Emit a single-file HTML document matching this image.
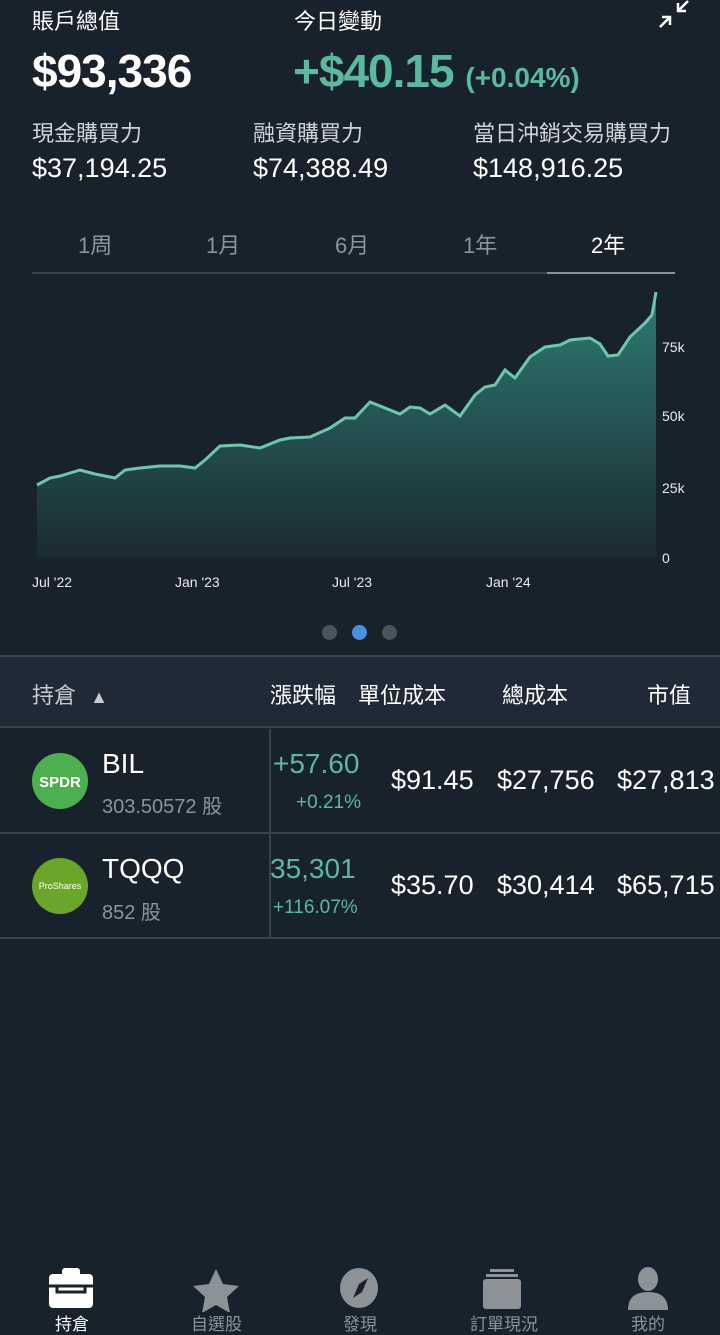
<!DOCTYPE html>
<html><head><meta charset="utf-8"><style>
*{margin:0;padding:0;box-sizing:border-box}
body{width:720px;height:1331px;background:#18222c;font-family:"Liberation Sans","Noto Sans CJK TC",sans-serif;color:#fff;position:relative;overflow:hidden}
.a{position:absolute;white-space:nowrap}
.g{color:#5db8a0}
.gr{color:#8b949c}
</style></head><body>
<div class="a" style="left:32px;top:4px;font-size:22px">賬戶總值</div>
<div class="a" style="left:294px;top:4px;font-size:22px">今日變動</div>
<svg class="a" style="left:656px;top:0" width="36" height="32" viewBox="0 0 36 32"><path d="M4 27L14 17M6 17h8v8M32 1L22 11M30 11h-8V3" stroke="#fff" stroke-width="2.5" fill="none"/></svg>
<div class="a" style="left:32px;top:44px;font-size:46px;font-weight:bold;letter-spacing:-1px">$93,336</div>
<div class="a g" style="left:293px;top:44px;font-size:46px;font-weight:bold;letter-spacing:-1px">+$40.15 <span style="font-size:28px;letter-spacing:0">(+0.04%)</span></div>
<div class="a" style="left:32px;top:116px;font-size:22px;color:#d0d4d8">現金購買力</div>
<div class="a" style="left:253px;top:116px;font-size:22px;color:#d0d4d8">融資購買力</div>
<div class="a" style="left:473px;top:116px;font-size:22px;color:#d0d4d8">當日沖銷交易購買力</div>
<div class="a" style="left:32px;top:153px;font-size:27px">$37,194.25</div>
<div class="a" style="left:253px;top:153px;font-size:27px">$74,388.49</div>
<div class="a" style="left:473px;top:153px;font-size:27px">$148,916.25</div>
<div class="a gr" style="left:78px;top:228px;font-size:22px">1周</div>
<div class="a gr" style="left:206px;top:228px;font-size:22px">1月</div>
<div class="a gr" style="left:335px;top:228px;font-size:22px">6月</div>
<div class="a gr" style="left:463px;top:228px;font-size:22px">1年</div>
<div class="a" style="left:591px;top:228px;font-size:22px">2年</div>
<div class="a" style="left:32px;top:272px;width:643px;height:2px;background:#3a444e"></div>
<div class="a" style="left:547px;top:272px;width:128px;height:2px;background:#8a939b"></div>
<svg class="a" style="left:0;top:280px" width="720" height="320" viewBox="0 280 720 320">
<defs><linearGradient id="f" x1="0" y1="0" x2="0" y2="1"><stop offset="0" stop-color="#2e7a72"/><stop offset="1" stop-color="#1a2a32"/></linearGradient></defs>
<path d="M37 485L50 478 60 476 80 470 95 474 115 478 125 470 140 468 160 466 180 466 195 468 205 460 220 446 240 445 260 448 280 440 290 438 310 437 330 428 345 418 355 418 370 402 385 408 400 414 410 407 420 408 430 414 445 405 460 416 475 395 485 387 495 385 505 370 515 378 530 357 545 347 560 345 570 340 590 338 600 344 608 356 618 355 630 337 645 323 652 315 656 292 656 558 37 558Z" fill="url(#f)"/>
<path d="M37 485L50 478 60 476 80 470 95 474 115 478 125 470 140 468 160 466 180 466 195 468 205 460 220 446 240 445 260 448 280 440 290 438 310 437 330 428 345 418 355 418 370 402 385 408 400 414 410 407 420 408 430 414 445 405 460 416 475 395 485 387 495 385 505 370 515 378 530 357 545 347 560 345 570 340 590 338 600 344 608 356 618 355 630 337 645 323 652 315 656 292" fill="none" stroke="#6cc7ae" stroke-width="3"/>
<g fill="#e8eaec" font-size="14" font-family="Liberation Sans"><text x="662" y="352">75k</text><text x="662" y="421">50k</text><text x="662" y="493">25k</text><text x="662" y="563">0</text>
<text x="32" y="587">Jul '22</text><text x="175" y="587">Jan '23</text><text x="332" y="587">Jul '23</text><text x="486" y="587">Jan '24</text></g>
</svg>
<div class="a" style="left:322px;top:625px;width:15px;height:15px;border-radius:50%;background:#4a545e"></div>
<div class="a" style="left:352px;top:625px;width:15px;height:15px;border-radius:50%;background:#4a90e2"></div>
<div class="a" style="left:382px;top:625px;width:15px;height:15px;border-radius:50%;background:#4a545e"></div>
<div class="a" style="left:0;top:655px;width:720px;height:73px;background:#1f2a36;border-top:2px solid #38434e;border-bottom:2px solid #38434e"></div>
<div class="a" style="left:32px;top:678px;font-size:22px;color:#c8ccd0">持倉 <span style="font-size:18px;margin-left:8px">▲</span></div>
<div class="a" style="left:270px;top:678px;font-size:22px">漲跌幅</div>
<div class="a" style="left:358px;top:678px;font-size:22px">單位成本</div>
<div class="a" style="left:502px;top:678px;font-size:22px">總成本</div>
<div class="a" style="left:647px;top:678px;font-size:22px">市值</div>
<div class="a" style="left:269px;top:729px;width:2px;height:209px;background:#38434e"></div>
<div class="a" style="left:0;top:832px;width:720px;height:2px;background:#38434e"></div>
<div class="a" style="left:0;top:937px;width:720px;height:2px;background:#38434e"></div>
<div class="a" style="left:32px;top:753px;width:56px;height:56px;border-radius:50%;background:#4caf50;font-size:15px;font-weight:bold;text-align:center;line-height:60px">SPDR</div>
<div class="a" style="left:32px;top:858px;width:56px;height:56px;border-radius:50%;background:#6aa62a;font-size:9px;text-align:center;line-height:56px">ProShares</div>
<div class="a" style="left:102px;top:748px;font-size:28px">BIL</div>
<div class="a gr" style="left:102px;top:790px;font-size:20px">303.50572 股</div>
<div class="a" style="left:102px;top:853px;font-size:28px">TQQQ</div>
<div class="a gr" style="left:102px;top:896px;font-size:20px">852 股</div>
<div class="a g" style="left:273px;top:748px;font-size:28px">+57.60</div>
<div class="a g" style="left:296px;top:792px;font-size:19px">+0.21%</div>
<div class="a g" style="left:270px;top:853px;font-size:28px">35,301</div>
<div class="a g" style="left:273px;top:897px;font-size:19px">+116.07%</div>
<div class="a" style="left:391px;top:765px;font-size:27px">$91.45</div>
<div class="a" style="left:497px;top:765px;font-size:27px">$27,756</div>
<div class="a" style="left:617px;top:765px;font-size:27px">$27,813</div>
<div class="a" style="left:391px;top:870px;font-size:27px">$35.70</div>
<div class="a" style="left:497px;top:870px;font-size:27px">$30,414</div>
<div class="a" style="left:617px;top:870px;font-size:27px">$65,715</div>
<svg class="a" style="left:0;top:1266px" width="720" height="46">
<g fill="#fff"><rect x="62" y="2" width="18" height="8" rx="3"/><rect x="49" y="8" width="44" height="34" rx="4"/></g><path d="M49 20h44M57 20v6h28v-6" stroke="#18222c" stroke-width="3" fill="none"/>
<path d="M216 3l7 15 16 2-12 11 3 16-14-8-14 8 3-16-12-11 16-2z" fill="#8c9296"/>
<ellipse cx="359" cy="22" rx="19" ry="20" fill="#8c9296"/><path d="M368 12l-6 14-9 6 6-14z" fill="#18222c"/>
<g fill="#8c9296"><rect x="490" y="3" width="24" height="3"/><rect x="486" y="8" width="32" height="3"/><rect x="483" y="13" width="38" height="30" rx="3"/></g>
<g fill="#8c9296"><ellipse cx="648" cy="13" rx="10" ry="12"/><path d="M628 44q0-18 20-18t20 18z"/></g>
</svg>
<div class="a" style="left:55px;top:1310px;font-size:17px">持倉</div>
<div class="a gr" style="left:191px;top:1310px;font-size:17px">自選股</div>
<div class="a gr" style="left:343px;top:1310px;font-size:17px">發現</div>
<div class="a gr" style="left:470px;top:1310px;font-size:17px">訂單現況</div>
<div class="a gr" style="left:631px;top:1310px;font-size:17px">我的</div>
</body></html>
